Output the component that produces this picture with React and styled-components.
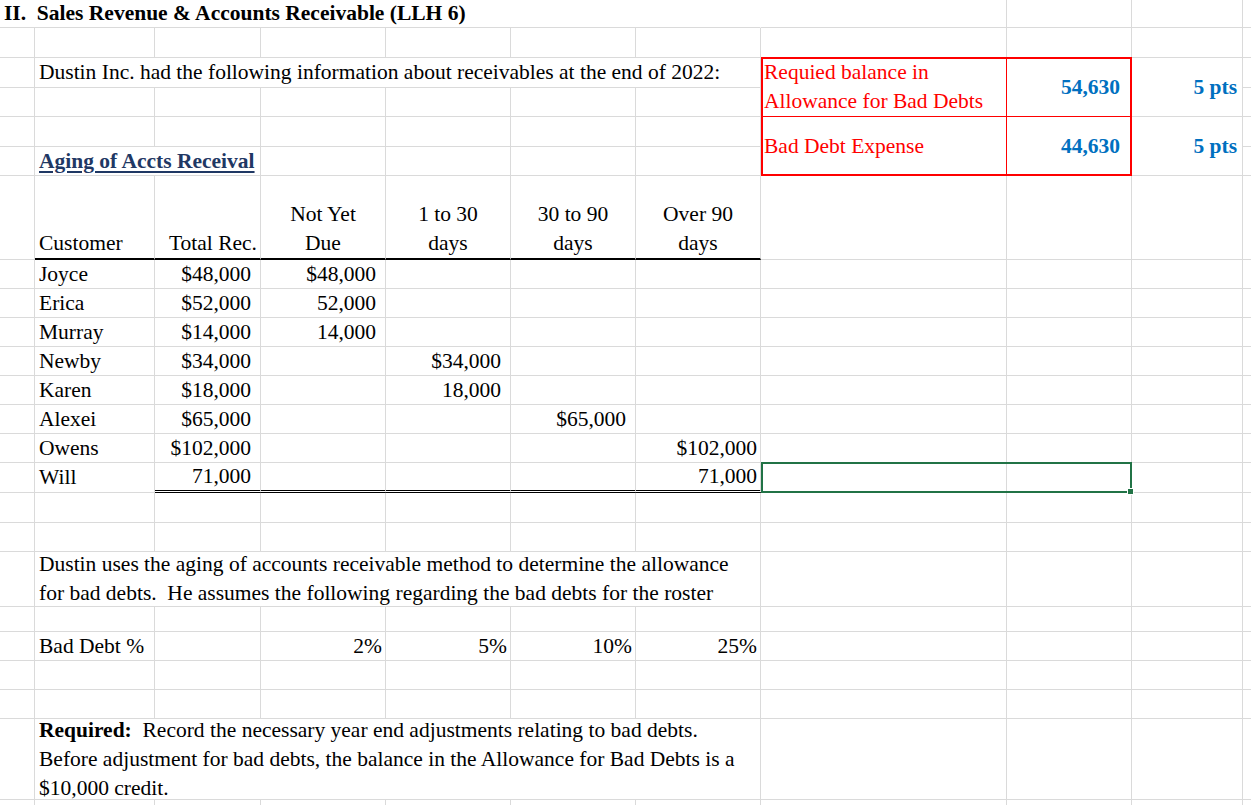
import React from "react";
import styled, { createGlobalStyle } from "styled-components";

const Global = createGlobalStyle`
  html, body { margin: 0; padding: 0; background: #fff; }
  body { font-family: "Liberation Serif", "Times New Roman", serif; color: #000; overflow: hidden; }
`;

const COLS = [35, 120, 106, 125, 125, 125, 125, 246, 125, 111, 30];
const ROWS = [28, 30, 30, 29, 30, 29, 84, 29, 29, 29, 29, 29, 29, 29, 30, 30, 29, 55, 25, 29, 29, 29, 81, 20];
const LINE = "#dadada";

const Sheet = styled.div`
  display: grid;
  grid-template-columns: ${COLS.map((c) => c + "px").join(" ")};
  grid-template-rows: ${ROWS.map((r) => r + "px").join(" ")};
  font-size: 21.5px;
  line-height: 29px;
  width: 1251px;
  height: 805px;
  overflow: hidden;
`;

const GridCell = styled.div`
  grid-column: ${(p) => p.$c};
  grid-row: ${(p) => p.$r};
  border-right: 1px solid ${LINE};
  border-bottom: 1px solid ${LINE};
  box-sizing: border-box;
`;

const Cell = styled.div`
  grid-column: ${(p) => p.$c};
  grid-row: ${(p) => p.$r};
  box-sizing: border-box;
  background: #fff;
  border-right: 1px solid ${(p) => (p.$noRight ? "#fff" : p.$rc || LINE)};
  border-bottom: ${(p) => p.$bb || `1px solid ${LINE}`};
  display: flex;
  flex-direction: column;
  justify-content: ${(p) => (p.$v === "top" ? "flex-start" : p.$v === "center" ? "center" : "flex-end")};
  align-items: ${(p) => (p.$a === "right" ? "flex-end" : p.$a === "center" ? "center" : "flex-start")};
  text-align: ${(p) => p.$a || "left"};
  padding: 0 ${(p) => p.$pr ?? 4}px 0 ${(p) => p.$pl ?? 4}px;
  color: ${(p) => p.$color || "#000"};
  font-weight: ${(p) => (p.$bold ? 700 : 400)};
  white-space: pre;
  overflow: visible;
`;

const Title = styled(Cell)`
  font-weight: 700;
  justify-content: flex-start;
  line-height: 27px;
`;

const Heading = styled.span`
  color: #1f3864;
  font-weight: 700;
  text-decoration: underline;
  text-underline-offset: 3px;
`;

const Outline = styled.div`
  grid-column: ${(p) => p.$c};
  grid-row: ${(p) => p.$r};
  border: 2px solid ${(p) => p.$color};
  margin: -1px 0 0 0;
  position: relative;
  pointer-events: none;
`;

const Handle = styled.div`
  position: absolute;
  right: -4px;
  bottom: -4px;
  width: 5px;
  height: 5px;
  background: #217346;
  border: 1px solid #fff;
`;

const headers = [
  ["Not Yet\nDue", 4],
  ["1 to 30\ndays", 5],
  ["30 to 90\ndays", 6],
  ["Over 90\ndays", 7],
];

const data = [
  ["Joyce", "$48,000", 4, "$48,000"],
  ["Erica", "$52,000", 4, "52,000"],
  ["Murray", "$14,000", 4, "14,000"],
  ["Newby", "$34,000", 5, "$34,000"],
  ["Karen", "$18,000", 5, "18,000"],
  ["Alexei", "$65,000", 6, "$65,000"],
  ["Owens", "$102,000", 7, "$102,000"],
  ["Will", "71,000", 7, "71,000"],
];

export default function App() {
  const base = [];
  ROWS.forEach((_, ri) =>
    COLS.forEach((__, ci) =>
      base.push(<GridCell key={`${ri}-${ci}`} $c={ci + 1} $r={ri + 1} />)
    )
  );
  const colPad = { 4: 9, 5: 9, 6: 9, 7: 3 };
  return (
    <>
      <Global />
      <Sheet>
        {base}
        <Title $c="1 / 8" $r="1" $noRight>{"II.  Sales Revenue & Accounts Receivable (LLH 6)"}</Title>
        <Cell $c="2 / 8" $r="3" $v="center">Dustin Inc. had the following information about receivables at the end of 2022:</Cell>
        <Cell $c="2 / 4" $r="6" $v="center"><Heading>Aging of Accts Receival</Heading></Cell>

        <Cell $c="8" $r="3 / 5" $v="center" $rc="red" $bb="1px solid red" $color="red" $pl={3}>{"Requied balance in\nAllowance for Bad Debts"}</Cell>
        <Cell $c="9" $r="3 / 5" $v="center" $a="right" $bb="1px solid red" $color="#0070c0" $bold $pr={11}>54,630</Cell>
        <Cell $c="10" $r="3 / 5" $v="center" $a="right" $color="#0070c0" $bold $pr={5}>5 pts</Cell>
        <Cell $c="8" $r="5 / 7" $v="center" $rc="red" $color="red" $pl={3}>Bad Debt Expense</Cell>
        <Cell $c="9" $r="5 / 7" $v="center" $a="right" $color="#0070c0" $bold $pr={11}>44,630</Cell>
        <Cell $c="10" $r="5 / 7" $v="center" $a="right" $color="#0070c0" $bold $pr={5}>5 pts</Cell>
        <Outline $c="8 / 10" $r="3 / 7" $color="red" />

        <Cell $c="2" $r="7" $bb="2px solid #000">Customer</Cell>
        <Cell $c="3" $r="7" $a="right" $pr={3} $bb="2px solid #000">Total Rec.</Cell>
        {headers.map(([t, c]) => (
          <Cell key={c} $c={c} $r="7" $a="center" $bb="2px solid #000">{t}</Cell>
        ))}

        {data.map(([name, total, col, amt], i) => {
          const r = 8 + i;
          const last = i === data.length - 1;
          const dbl = last ? "3px double #000" : undefined;
          const cells = [
            <Cell key={`n${i}`} $c="2" $r={r} $v="center">{name}</Cell>,
            <Cell key={`t${i}`} $c="3" $r={r} $v="center" $a="right" $pr={9} $bb={dbl}>{total}</Cell>,
          ];
          for (let c = 4; c <= 7; c++) {
            cells.push(
              <Cell key={`c${i}-${c}`} $c={c} $r={r} $v="center" $a="right" $pr={colPad[c]} $bb={dbl}>
                {c === col ? amt : ""}
              </Cell>
            );
          }
          return cells;
        })}
        <Outline $c="8 / 10" $r="15" $color="#217346">
          <Handle />
        </Outline>

        <Cell $c="2 / 8" $r="18" $v="center">{"Dustin uses the aging of accounts receivable method to determine the allowance\nfor bad debts.  He assumes the following regarding the bad debts for the roster"}</Cell>

        <Cell $c="2" $r="20" $v="center">Bad Debt %</Cell>
        <Cell $c="4" $r="20" $v="center" $a="right" $pr={3}>2%</Cell>
        <Cell $c="5" $r="20" $v="center" $a="right" $pr={3}>5%</Cell>
        <Cell $c="6" $r="20" $v="center" $a="right" $pr={3}>10%</Cell>
        <Cell $c="7" $r="20" $v="center" $a="right" $pr={3}>25%</Cell>

        <Cell $c="2 / 8" $r="23" $v="center">
          <span><b>Required:</b>{"  Record the necessary year end adjustments relating to bad debts.\nBefore adjustment for bad debts, the balance in the Allowance for Bad Debts is a\n$10,000 credit."}</span>
        </Cell>
      </Sheet>
    </>
  );
}
